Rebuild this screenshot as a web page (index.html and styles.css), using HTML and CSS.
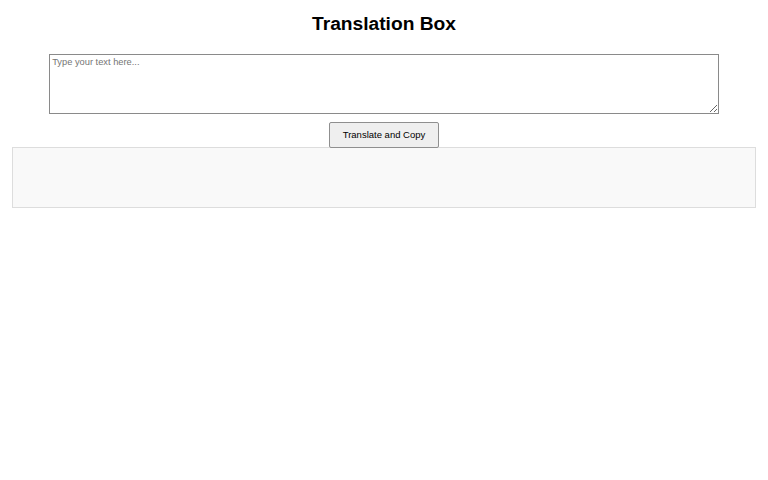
FILE: index.html
```html
<!DOCTYPE html>
<html lang="en">

<head>
    <meta charset="UTF-8">
    <meta name="viewport" content="width=device-width, initial-scale=1.0">
    <title>Translation Box</title>
    <link rel="stylesheet" href="styles.css">
</head>

<body>
    <h1 class="heading">Translation Box</h1>
    <textarea id="input" class="input" placeholder="Type your text here..."></textarea>
    <button class="btn" id="translate">Translate and Copy</button>
    <div class="output" id="output"></div>
</body>

</html>
```

FILE: styles.css
```css
* {
    box-sizing: border-box;
}

body {
    margin: 0;
    padding: 12px;
    font-family: "Liberation Sans", Arial, sans-serif;
    background-color: #fff;
}

.heading {
    margin: 0 0 18px 0;
    font-size: 19.2px;
    line-height: 24px;
    font-weight: bold;
    text-align: center;
    color: #000;
}

.input {
    display: block;
    width: 90%;
    height: 60px;
    margin: 0 auto;
    padding: 2px;
    border: 1px solid #8a8a8a;
    font-family: "Liberation Sans", Arial, sans-serif;
    font-size: 9.3px;
    resize: vertical;
}

.input::placeholder {
    color: #757575;
}

.btn {
    position: relative;
    display: block;
    margin: 8px auto 0 auto;
    height: 26px;
    padding: 0 13px 2px 13px;
    font-family: "Liberation Sans", Arial, sans-serif;
    font-size: 9.5px;
    color: #000;
    background-color: #efefef;
    border: 1px solid #8f8f8f;
    border-radius: 2px;
    z-index: 1;
}

.output {
    margin-top: -1px;
    height: 61px;
    border: 1px solid #ddd;
    background-color: #f9f9f9;
}
```
